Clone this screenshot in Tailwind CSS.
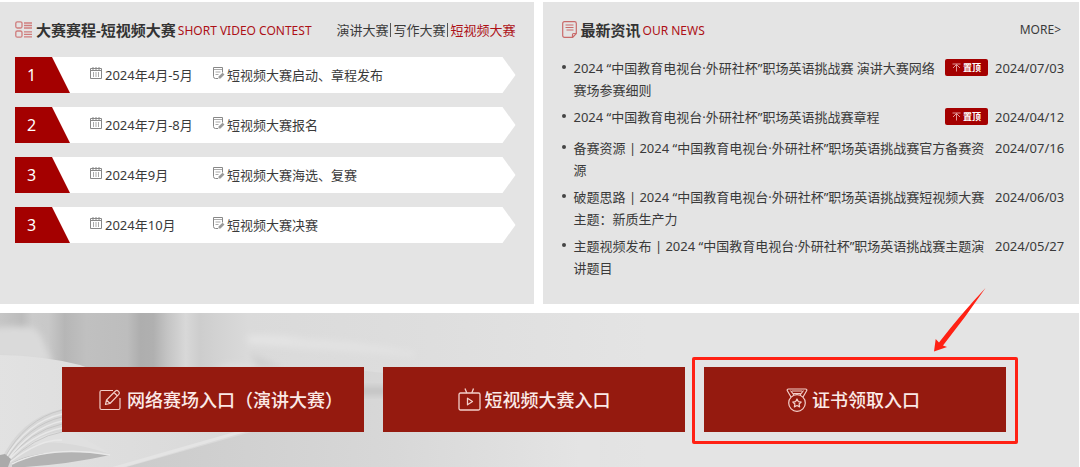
<!DOCTYPE html>
<html lang="zh-CN">
<head>
<meta charset="utf-8">
<meta name="viewport" content="width=device-width, initial-scale=1">
<title>短视频大赛</title>
<script src="https://cdn.jsdelivr.net/npm/@tailwindcss/browser@4"></script>
</head>
<body class="bg-white font-['Noto_Sans','Noto_Sans_CJK_SC',sans-serif] text-[13px] leading-[22px] text-[#3a3a3a]">
<svg class="hidden" aria-hidden="true">
  <symbol id="calendar" viewBox="0 0 12 12">
    <path d="M.5 1.5h11v10H.5zM3 0v3M9 0v3M6 0v3M1 3.5h10" fill="none" stroke="#888"/>
    <path d="M3.5 5v5M6 5v5M8.500 5v5" fill="none" stroke="#aaa"/>
  </symbol>
  <symbol id="note" viewBox="0 0 12 12">
    <path d="M5 11.500H2.500a2 2 0 0 1-2-2V.5h9v5" fill="none" stroke="#888"/>
    <path d="M1 2.500h8M2.500 5h5M2.500 7.500h3" fill="none" stroke="#aaa"/>
    <path d="M5.500 9.500L9.500 5.800l2 1.800-4 3.900H5.500z" fill="#999"/>
  </symbol>
  <symbol id="pin" viewBox="0 0 9 9">
    <path d="M.5 1h8M4.500 1.500v7M1 5l3.500-3.500L8 5" fill="none" stroke="#e9a9a9" stroke-width=".9"/>
  </symbol>
</svg>

<main class="flex min-h-screen flex-col">
  <div class="grid grid-cols-[534fr_537fr] gap-[9px] pt-[2px] pr-px">
    <section class="bg-[#e4e4e4] pr-[18px] pb-[61px] pl-[15px]">
      <header class="flex h-[55px] items-center justify-between whitespace-nowrap">
        <h2 class="flex items-center gap-[2px]">
          <svg class="mr-[2px] size-[17px]" viewBox="0 0 17 17" fill="none" stroke="#cf7c7c" stroke-width="1.300" aria-hidden="true">
            <rect x=".8" y=".8" width="6.200" height="6.200" rx="1.500"/><rect x=".8" y="10" width="6.200" height="6.200" rx="1.500"/>
            <path d="M9 2h8M9 4.500h8M9 7h8M9 10.800h8M9 13.300h8M9 15.800h8"/>
          </svg>
          <span class="text-[15px] font-bold text-[#333]">大赛赛程-短视频大赛</span>
          <span class="pt-[2px] text-xs text-[#ad1016]">SHORT VIDEO CONTEST</span>
        </h2>
        <nav class="flex items-center gap-[2px]">
          <a href="#speech">演讲大赛</a>
          <span class="h-[14px] w-px bg-[#555]"></span>
          <a href="#writing">写作大赛</a>
          <span class="h-[14px] w-px bg-[#555]"></span>
          <a href="#video" class="text-[#ad1016]">短视频大赛</a>
        </nav>
      </header>
      <ol class="flex flex-col gap-[14px]">
        <li class="flex h-9 items-center bg-white [clip-path:polygon(0_0,calc(100%-13px)_0,100%_50%,calc(100%-13px)_100%,0_100%)]">
          <span class="flex h-full w-[55px] items-center bg-[#a40000] pl-3 text-base text-white [clip-path:polygon(0_0,37px_0,100%_100%,0_100%)]">1</span>
          <span class="ml-5 flex w-[123px] items-center gap-[3px]"><svg class="mb-1 size-3"><use href="#calendar"/></svg>2024年4月-5月</span>
          <span class="flex items-center gap-[2px]"><svg class="mb-1 size-3"><use href="#note"/></svg>短视频大赛启动、章程发布</span>
        </li>
        <li class="flex h-9 items-center bg-white [clip-path:polygon(0_0,calc(100%-13px)_0,100%_50%,calc(100%-13px)_100%,0_100%)]">
          <span class="flex h-full w-[55px] items-center bg-[#a40000] pl-3 text-base text-white [clip-path:polygon(0_0,37px_0,100%_100%,0_100%)]">2</span>
          <span class="ml-5 flex w-[123px] items-center gap-[3px]"><svg class="mb-1 size-3"><use href="#calendar"/></svg>2024年7月-8月</span>
          <span class="flex items-center gap-[2px]"><svg class="mb-1 size-3"><use href="#note"/></svg>短视频大赛报名</span>
        </li>
        <li class="flex h-9 items-center bg-white [clip-path:polygon(0_0,calc(100%-13px)_0,100%_50%,calc(100%-13px)_100%,0_100%)]">
          <span class="flex h-full w-[55px] items-center bg-[#a40000] pl-3 text-base text-white [clip-path:polygon(0_0,37px_0,100%_100%,0_100%)]">3</span>
          <span class="ml-5 flex w-[123px] items-center gap-[3px]"><svg class="mb-1 size-3"><use href="#calendar"/></svg>2024年9月</span>
          <span class="flex items-center gap-[2px]"><svg class="mb-1 size-3"><use href="#note"/></svg>短视频大赛海选、复赛</span>
        </li>
        <li class="flex h-9 items-center bg-white [clip-path:polygon(0_0,calc(100%-13px)_0,100%_50%,calc(100%-13px)_100%,0_100%)]">
          <span class="flex h-full w-[55px] items-center bg-[#a40000] pl-3 text-base text-white [clip-path:polygon(0_0,37px_0,100%_100%,0_100%)]">3</span>
          <span class="ml-5 flex w-[123px] items-center gap-[3px]"><svg class="mb-1 size-3"><use href="#calendar"/></svg>2024年10月</span>
          <span class="flex items-center gap-[2px]"><svg class="mb-1 size-3"><use href="#note"/></svg>短视频大赛决赛</span>
        </li>
      </ol>
    </section>

    <section class="bg-[#e4e4e4] pr-[14px] pl-[19px]">
      <header class="flex h-[55px] items-center justify-between whitespace-nowrap pr-1">
        <h2 class="flex items-center gap-[2px]">
          <svg class="mr-[2px] h-[17px] w-[15px]" viewBox="0 0 15 17" fill="none" stroke="#c96a6a" stroke-width="1.200" aria-hidden="true">
            <path d="M2.500.7h10q1.800 0 1.800 1.800v10l-3.600 3.800H2.500Q.7 16.300.7 14.500v-12Q.7.7 2.500.7zM14 12.500h-2.500q-1 0-1 1V16M3.500 4h8M3.500 6.500h8M4.500 9h7"/>
          </svg>
          <span class="text-[15px] font-bold text-[#333]">最新资讯</span>
          <span class="pt-[2px] text-xs text-[#ad1016]">OUR NEWS</span>
        </h2>
        <a href="#more" class="text-xs">MORE&gt;</a>
      </header>
      <ul class="flex flex-col gap-[5px]">
        <li class="flex">
          <span class="mt-2 mr-2 size-1 shrink-0 rounded-full bg-[#444]"></span>
          <a href="#n1" class="min-w-0 flex-1 pr-1">2024 “中国教育电视台·外研社杯”职场英语挑战赛 演讲大赛网络赛场参赛细则</a>
          <span class="mt-[2px] mr-[7px] flex h-[17px] w-[43px] shrink-0 items-center justify-center gap-[2px] rounded-xs bg-[#a40000] text-[9px] leading-none font-bold text-white"><svg class="size-[9px]"><use href="#pin"/></svg>置顶</span>
          <time class="w-[70px] shrink-0">2024/07/03</time>
        </li>
        <li class="flex min-h-[26px]">
          <span class="mt-2 mr-2 size-1 shrink-0 rounded-full bg-[#444]"></span>
          <a href="#n2" class="min-w-0 flex-1 pr-1">2024 “中国教育电视台·外研社杯”职场英语挑战赛章程</a>
          <span class="mt-[2px] mr-[7px] flex h-[17px] w-[43px] shrink-0 items-center justify-center gap-[2px] rounded-xs bg-[#a40000] text-[9px] leading-none font-bold text-white"><svg class="size-[9px]"><use href="#pin"/></svg>置顶</span>
          <time class="w-[70px] shrink-0">2024/04/12</time>
        </li>
        <li class="flex">
          <span class="mt-2 mr-2 size-1 shrink-0 rounded-full bg-[#444]"></span>
          <a href="#n3" class="min-w-0 flex-1 pr-1">备赛资源 | 2024 “中国教育电视台·外研社杯”职场英语挑战赛官方备赛资源</a>
          <time class="w-[70px] shrink-0">2024/07/16</time>
        </li>
        <li class="flex">
          <span class="mt-2 mr-2 size-1 shrink-0 rounded-full bg-[#444]"></span>
          <a href="#n4" class="min-w-0 flex-1 pr-1">破题思路 | 2024 “中国教育电视台·外研社杯”职场英语挑战赛短视频大赛主题：新质生产力</a>
          <time class="w-[70px] shrink-0">2024/06/03</time>
        </li>
        <li class="flex">
          <span class="mt-2 mr-2 size-1 shrink-0 rounded-full bg-[#444]"></span>
          <a href="#n5" class="min-w-0 flex-1 pr-1">主题视频发布 | 2024 “中国教育电视台·外研社杯”职场英语挑战赛主题演讲题目</a>
          <time class="w-[70px] shrink-0">2024/05/27</time>
        </li>
      </ul>
    </section>
  </div>

  <section class="relative mt-[9px] mr-px flex-1 bg-[#e4e4e4] pt-[54px] pr-[73px] pb-[35px] pl-[62px]">
    <svg class="absolute inset-0 size-full" viewBox="0 0 1080 154" preserveAspectRatio="xMinYMin slice" aria-hidden="true">
      <defs>
        <linearGradient id="wall" gradientUnits="userSpaceOnUse" x1="0" x2="1080" y1="0" y2="0">
          <stop offset="0" stop-color="#c6c6c6"/><stop offset=".02" stop-color="#bcbcbc"/><stop offset=".03" stop-color="#cacaca"/>
          <stop offset=".045" stop-color="#c8c8c8"/><stop offset=".06" stop-color="#b6b6b6"/><stop offset=".08" stop-color="#c0c0c0"/>
          <stop offset=".118" stop-color="#bdbdbd"/><stop offset=".13" stop-color="#aeaeae"/><stop offset=".142" stop-color="#b0b0b0"/>
          <stop offset=".155" stop-color="#c4c4c4"/><stop offset=".172" stop-color="#d8d8d8"/><stop offset=".185" stop-color="#cdcdcd"/>
          <stop offset=".2" stop-color="#d2d2d2"/><stop offset=".23" stop-color="#dadada"/><stop offset=".4" stop-color="#dedede"/>
          <stop offset=".6" stop-color="#e4e4e4"/><stop offset="1" stop-color="#e4e4e4"/>
        </linearGradient>
        <linearGradient id="page" x1="0" x2="1" y1="0" y2="0">
          <stop offset="0" stop-color="#e2e2e2"/><stop offset="1" stop-color="#d8d8d8"/>
        </linearGradient>
        <linearGradient id="desk" gradientUnits="userSpaceOnUse" x1="120" x2="580" y1="0" y2="0">
          <stop offset="0" stop-color="#cbcbcb"/><stop offset=".6" stop-color="#d8d8d8"/><stop offset="1" stop-color="#e4e4e4"/>
        </linearGradient>
        <filter id="soft" x="-20%" y="-40%" width="140%" height="180%"><feGaussianBlur stdDeviation="3"/></filter>
      </defs>
      <path fill="url(#wall)" d="M0 0h1080v154H0z"/>
      <g filter="url(#soft)">
        <path fill="#dadada" d="M-10 17q10-5 40-3 10 2 14 16l8 20-62-4z"/>
        <path fill="#e3e3e3" d="M248 22q30-1 55 3v10q-30-2-55-4z"/>
        <path fill="#e2e2e2" d="M290 25q60 1 125 14v5q-60-6-125-9z"/>
        <path fill="#e0e0e0" d="M214 56q20-10 44 0z"/>
        <path fill="#cfcfcf" d="M250 40l8 14h25z"/>
      </g>
      <path fill="url(#desk)" d="M0 160V54h330l270 30v80z"/>
      <path fill="#c2c2c2" filter="url(#soft)" d="M350 74h55v8h-55z"/>
      <path fill="url(#page)" d="M-4 42Q40 42 80 52l182 64-150 42H-4z"/>
      <path fill="#e4e4e4" d="M112 154l140-40 4 2-132 38z"/>
      <path fill="#d7d7d7" d="M0 149Q20 105 62 96v22l48 22-98 14H0z"/>
      <path fill="#e0e0e0" d="M20 140q20-22 50-22l40 22-40-2z"/>
      <path fill="#b3b3b3" d="M12 150q30-18 98-8-40 9-85 12H12z"/>
      <path fill="#d9d9d9" d="M10 144q22-17 52-14 25 3 48 11-55-9-96 7z"/>
      <g fill="none" stroke="#c2c2c2" stroke-width=".8">
        <path d="M4 146Q25 106 62 97M6 147Q28 112 62 104M7 148Q30 118 62 111M9 149Q34 124 62 119"/>
      </g>
      <g fill="none" stroke="#e8e8e8" stroke-width="1.400">
        <path d="M5 146Q27 109 62 101M7 148Q30 115 62 108M8 148Q32 121 62 115M10 149Q40 126 62 127M12 151Q50 132 110 142"/>
      </g>
      <path fill="#aaa" d="M0 142l5-1 6 5-3 8H0z"/>
    </svg>
    <div class="relative grid grid-cols-3 gap-[19px] text-lg font-medium text-[#fbe9e6]">
      <button type="button" class="flex h-[65px] items-center justify-center gap-[6px] bg-[#951a0f] pl-4 whitespace-nowrap">
        <svg class="size-[22px]" viewBox="0 0 22 22" fill="none" stroke="#f3cfca" stroke-width="1.200" stroke-linejoin="round" aria-hidden="true">
          <path d="M14 1.500H2.500q-1.500 0-1.500 1.500v16q0 1.500 1.500 1.500h17q1.500 0 1.500-1.500V9"/>
          <path d="M6.500 15.500l1-4.500L16.500 2q1.500-1.200 3 .3t.3 3L11 14.500zM7.500 11l3.500 3.500M15 3.500L18.500 7"/>
        </svg>
        网络赛场入口（演讲大赛）
      </button>
      <button type="button" class="flex h-[65px] items-center justify-center gap-1 bg-[#951a0f] whitespace-nowrap">
        <svg class="size-[23px]" viewBox="0 0 23 23" fill="none" stroke="#f3cfca" stroke-width="1.300" stroke-linejoin="round" aria-hidden="true">
          <rect x="1" y="5" width="21" height="17" rx="1.500"/><path d="M7 .5L8.800 5M15.500.5L13.800 5M9.500 10.200l5 3.300-5 3.300z"/>
        </svg>
        短视频大赛入口
      </button>
      <div class="relative">
        <button type="button" class="flex h-[65px] w-full items-center justify-center gap-1 bg-[#951a0f] pr-1 whitespace-nowrap">
          <svg class="h-[24px] w-[22px]" viewBox="0 0 22 24" fill="none" stroke="#f3cfca" stroke-width="1.200" stroke-linejoin="round" aria-hidden="true">
            <circle cx="11" cy="15" r="8.300"/>
            <path d="M5 9L1.200 2.500Q1 1 2.500 1h17q1.500 0 1.300 1.500L17 9M4.500 2.500L8 7M17.500 2.500L14 7M6 3h10M7.500 5.500h7"/>
            <path d="M11 11l1.300 2.600 2.900.4-2.100 2 .5 2.900L11 17.500l-2.600 1.400.5-2.900-2.100-2 2.900-.4z"/>
          </svg>
          证书领取入口
        </button>
        <span class="pointer-events-none absolute -inset-x-3 -top-[10px] -bottom-3 rounded-xs border-3 border-[#ff2114]"></span>
        <svg class="pointer-events-none absolute right-5 bottom-[80px] h-[64px] w-[52px]" viewBox="0 0 52 64" fill="#ff2114" aria-hidden="true">
          <path d="M0 63.500L1.700 51 5 54.500Q27 26 51.500 0 31 30 9 57.500L13 59z"/>
        </svg>
      </div>
    </div>
  </section>
</main>
</body>
</html>
